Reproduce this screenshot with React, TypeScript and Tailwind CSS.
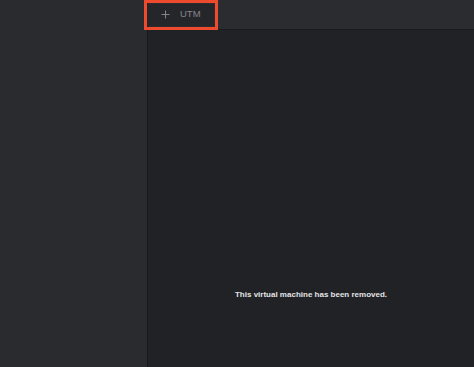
export default function App() {
  return (
    <div className="relative flex h-[367px] w-[474px] overflow-hidden bg-[#212226] font-['Liberation_Sans',Arial,sans-serif]">
      <aside className="h-full w-[148px] shrink-0 border-r border-[#18191c] bg-[#2a2b2f]" />
      <main className="flex min-w-0 flex-1 flex-col">
        <div className="flex h-[30px] shrink-0 items-center border-b border-[#1a1b1e] bg-[#2b2c30]">
          <div className="ml-[-1px] flex h-[22px] w-[67px] items-center gap-[10px] bg-[#25262a] pl-[14px] text-[9.5px] text-[#85868b]">
            <svg width="9" height="9" viewBox="0 0 9 9" fill="none" stroke="#85868b" strokeWidth="1">
              <path d="M4.5 0.5v8M0.5 4.5h8" />
            </svg>
            <span>UTM</span>
          </div>
        </div>
        <div className="flex flex-1 justify-center pt-[259px]">
          <p className="text-[8px] font-bold text-[#e4e4e6]">This virtual machine has been removed.</p>
        </div>
      </main>
      <div className="pointer-events-none absolute left-[144px] top-0 h-[30px] w-[74px] border-[3.5px] border-[#ee4a2e]" />
    </div>
  );
}
